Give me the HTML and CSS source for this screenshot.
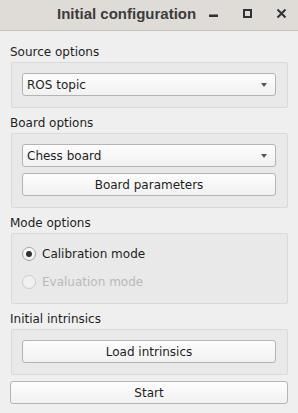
FILE: index.html
```html
<!DOCTYPE html>
<html lang="en">
<head>
  <meta charset="UTF-8">
  <title>Initial configuration</title>
  <link rel="stylesheet" href="styles.css">
</head>
<body>
  <div class="titlebar">
    <span class="title">Initial configuration</span>
    <span class="wbtn">
      <svg width="34" height="30" viewBox="0 0 34 30"><rect x="13" y="14.5" width="9" height="2.5" fill="#2f3336"/></svg>
    </span>
    <span class="wbtn">
      <svg width="34" height="30" viewBox="0 0 34 30"><rect x="14" y="10" width="7" height="7" fill="none" stroke="#2f3336" stroke-width="2"/></svg>
    </span>
    <span class="wbtn">
      <svg width="34" height="30" viewBox="0 0 34 30"><path d="M13.5 9.5 L21.5 17.5 M21.5 9.5 L13.5 17.5" stroke="#2f3336" stroke-width="2"/></svg>
    </span>
  </div>

  <div class="content">
    <!-- source -->
    <div class="group-label">Source options</div>
    <div class="group">
      <div class="combo"><span>ROS topic</span><span class="arrow"></span></div>
    </div>

    <!-- board -->
    <div class="group-label">Board options</div>
    <div class="group">
      <div class="combo"><span>Chess board</span><span class="arrow"></span></div>
      <button class="btn">Board parameters</button>
    </div>

    <!-- mode -->
    <div class="group-label">Mode options</div>
    <div class="group modes">
      <label class="radio"><span class="dot checked"></span>Calibration mode</label>
      <label class="radio disabled"><span class="dot"></span>Evaluation mode</label>
    </div>

    <!-- intrinsics -->
    <div class="group-label">Initial intrinsics</div>
    <div class="group last">
      <button class="btn">Load intrinsics</button>
    </div>

    <button class="btn">Start</button>
  </div>
</body>
</html>
```

FILE: styles.css
```css
html, body { margin:0; padding:0; height:100%; }
body {
  background:#efefef;
  font-family:"DejaVu Sans", sans-serif;
  font-size:12px;
  color:#1e1e1e;
}
.titlebar {
  display:flex; height:30px;
  background:#dfdbd6;
  border-bottom:1px solid #c6c2bd;
}
.title {
  flex:1; padding-left:57px; white-space:nowrap;
  font:bold 15px/28px "Liberation Sans", sans-serif;
  color:#3c3c3c;
}
.wbtn { width:34px; height:30px; }
.wbtn svg { display:block; }

.content { padding:13px 10px 0 10px; }
.group-label { height:16px; line-height:16px; margin-bottom:2px; }
.group {
  display:flex; flex-direction:column; gap:6px;
  margin:0 0 7px 1px;
  padding:10px 11px 11px 10px;
  border:1px solid #d9d9d9; border-radius:2px;
  background:#e9e9e9;
}
.group.last { margin-bottom:6px; }
.group.modes { gap:0; padding-top:6px; padding-bottom:7px; }

.combo {
  display:flex; align-items:center;
  height:23px; box-sizing:border-box;
  padding-left:4px;
  border:1px solid #b4b4b4; border-radius:3px;
  background:linear-gradient(#fdfdfd, #f1f1f1);
}
.arrow {
  margin-left:auto; margin-right:8px;
  border-left:3px solid transparent;
  border-right:3px solid transparent;
  border-top:4px solid #555;
}
.btn {
  display:block; width:100%; height:23px; box-sizing:border-box;
  margin:0; padding:0;
  font-family:"DejaVu Sans", sans-serif; font-size:12px; color:#1e1e1e;
  border:1px solid #b4b4b4; border-radius:3px;
  background:linear-gradient(#fdfdfd, #f1f1f1);
}
.radio {
  display:flex; align-items:center; gap:6px;
  height:28px;
}
.dot {
  width:14px; height:14px; box-sizing:border-box;
  border:1px solid #a3a3a3; border-radius:50%;
  background:linear-gradient(#fdfdfd, #f0f0f0);
  display:flex; align-items:center; justify-content:center;
}
.dot.checked::after {
  content:""; width:6px; height:6px; border-radius:50%;
  background:#333;
}
.radio.disabled { color:#b9b9b9; }
.radio.disabled .dot { border-color:#cdcdcd; background:#f0f0f0; }
```
